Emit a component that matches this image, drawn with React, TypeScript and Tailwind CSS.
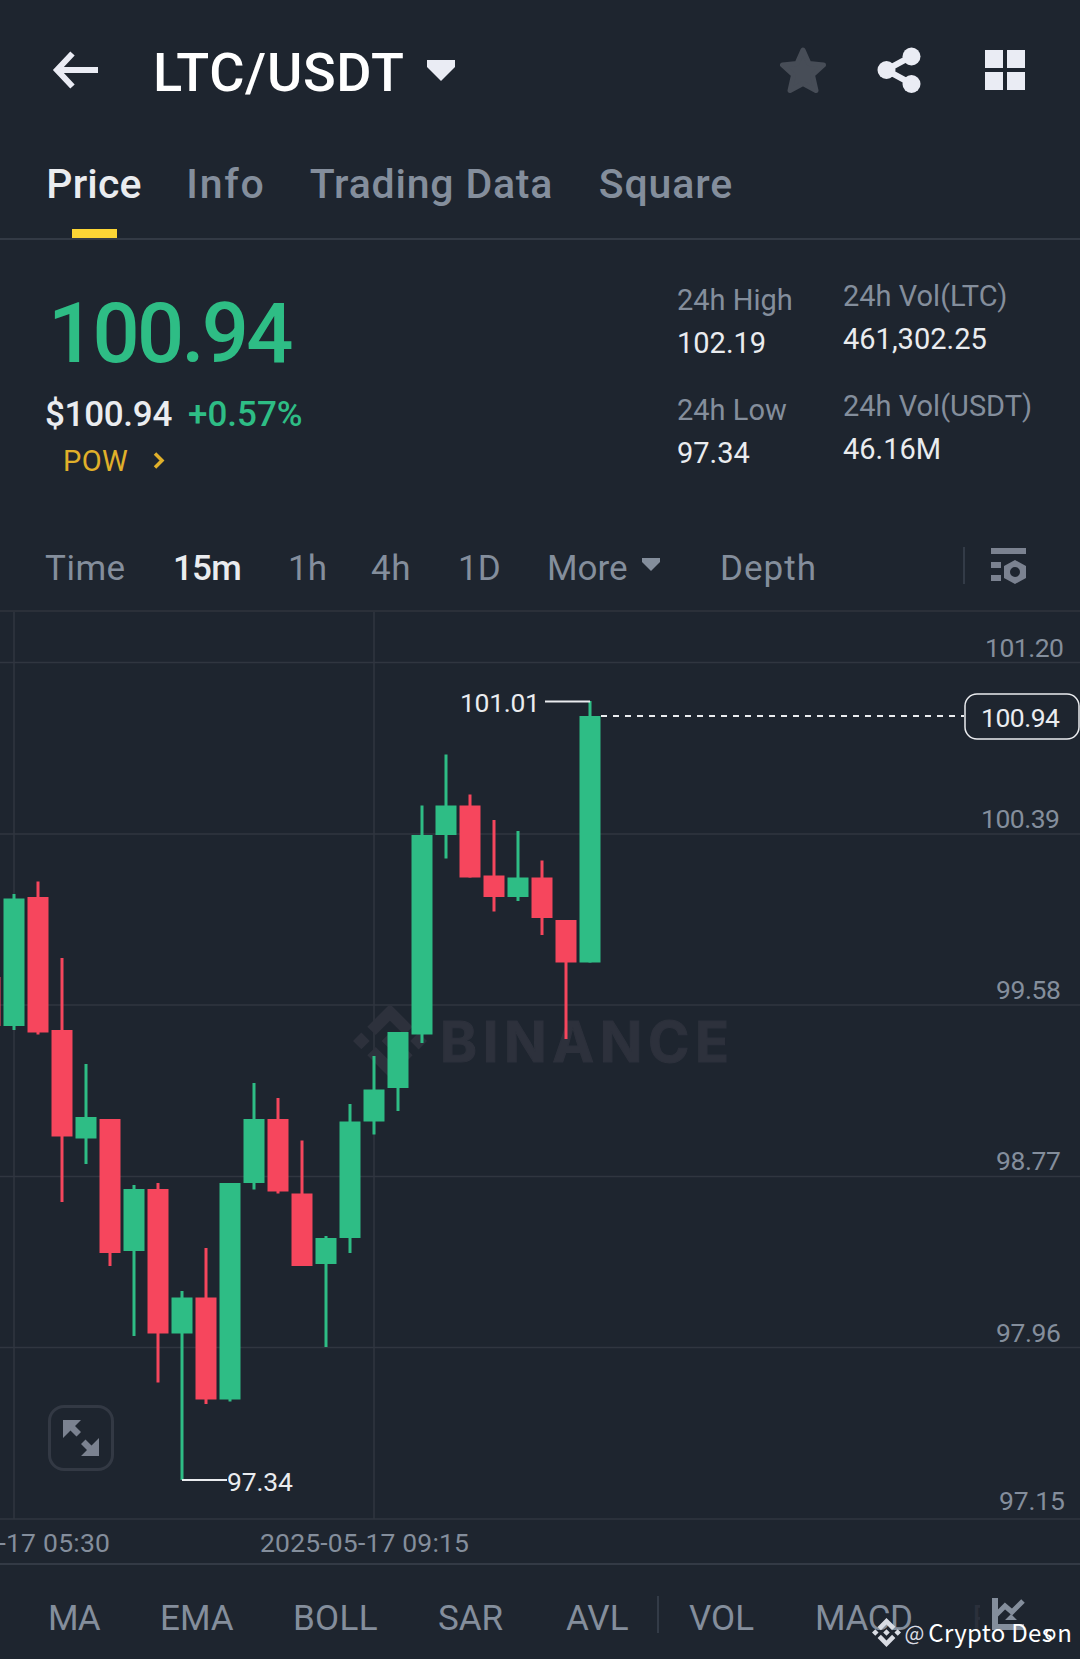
import clsx from 'clsx'
import { SiBinance } from 'react-icons/si'

const GREEN = '#2ebd85'
const RED = '#f6465d'

const tabs = [
    { name: 'Price', className: 'ml-[47px] w-[94px] tracking-[0.200px]', active: true },
    { name: 'Info', className: 'ml-[46px] w-[78px] tracking-[1.800px]' },
    { name: 'Trading Data', className: 'ml-[45px] w-[243px] tracking-[0.800px]' },
    { name: 'Square', className: 'ml-[45px] w-[136px] tracking-[0.900px]' },
]

const intervals = [
    { name: 'Time', className: 'ml-[45px] w-[128px] tracking-[0.500px]' },
    { name: '15m', className: 'w-[115px] tracking-[-0.800px]', active: true },
    { name: '1h', className: 'w-[83px]' },
    { name: '4h', className: 'w-[87px] tracking-[0.500px]' },
    { name: '1D', className: 'w-[89px]' },
]

const indicators = [
    { name: 'MA', className: 'ml-[48px] w-[112px] tracking-[-1px]' },
    { name: 'EMA', className: 'w-[133px]' },
    { name: 'BOLL', className: 'w-[145px] tracking-[0.300px]' },
    { name: 'SAR', className: 'w-[128px]' },
    { name: 'AVL', className: 'w-[91px]' },
]

// horizontal grid lines and their labels, in chart pixels
const priceLevels = [
    { price: '101.20', y: 50.5, x: 985, base: 45, width: 79 },
    { price: '100.39', y: 222, x: 981, base: 216, width: 79 },
    { price: '99.58', y: 393, x: 996, base: 387, width: 65 },
    { price: '98.77', y: 564.5, x: 996, base: 558, width: 65 },
    { price: '97.96', y: 735.5, x: 996, base: 730, width: 65 },
    { price: '97.15', y: 907, x: 999, base: 898, width: 66 },
]

// x, wick top, body top, body bottom, wick bottom, rising
const candles: [number, number, number, number, number, boolean][] = [
    [-10, 365, 365, 414, 414, false],
    [14, 282, 286.5, 414, 418, true],
    [38, 269.5, 285, 420.5, 422.5, false],
    [62, 346, 418, 524.5, 590, false],
    [86, 452, 505, 526.5, 552, true],
    [110, 507, 507, 641, 654, false],
    [134, 573, 577, 639, 724, true],
    [158, 571, 577, 721.5, 770.5, false],
    [182, 679, 685.5, 721.5, 868, true],
    [206, 636, 685.5, 787.5, 792, false],
    [230, 571, 571, 787.5, 789.5, true],
    [254, 471, 507, 571, 577.5, true],
    [278, 486, 507, 579.5, 581.5, false],
    [302, 528.5, 581.5, 654, 654, false],
    [326, 624, 626, 652, 735, true],
    [350, 492, 509.5, 626, 641, true],
    [374, 444, 477.5, 509.5, 522.5, true],
    [398, 420, 420, 476, 499, true],
    [422, 193.5, 223, 422.5, 431, true],
    [446, 142.5, 193.5, 223, 246.5, true],
    [470, 182.5, 193.5, 265.5, 265.5, false],
    [494, 208, 263.5, 285, 299.5, false],
    [518, 219, 265.5, 285, 289, true],
    [542, 248.5, 265.5, 306, 323, false],
    [566, 308, 308, 350.5, 427, false],
    [590, 89, 104, 350.5, 350.5, true],
]

function Header() {
    return (
        <header className="flex h-[140px] items-center">
            <svg className="ml-[52px] h-[38px] w-[47px]" viewBox="0 0 47 38" fill="none" stroke="#eaecf4" strokeWidth="6">
                <path d="M46 19H5M20.5 2.5L5 19l15.500 16.500" />
            </svg>
            <h1 className="ml-[54px] w-[252px] pt-[5px] text-[54px] font-medium leading-none tracking-[0.700px] text-white">
                LTC/USDT
            </h1>
            <svg className="ml-[22px] h-[21px] w-[28px]" viewBox="0 0 28 21">
                <path d="M0 0h28v7L14 21 0 7z" fill="#eaecf4" />
            </svg>
            <svg
                className="ml-[325px] h-[48px] w-[46px]"
                viewBox="0 0 46 48"
                fill="#474d57"
                stroke="#474d57"
                strokeWidth="5"
                strokeLinejoin="round"
            >
                <path d="M23 4l6 13.500 14.500 1.500-11 10 3.500 15.500L23 37.500 10 44.500 13.500 29 2.500 19l14.500-1.500z" />
            </svg>
            <svg className="ml-[51px] h-[46px] w-[44px]" viewBox="0 0 44 46" fill="#eaecf4">
                <path d="M35 9L9 23l26 14" fill="none" stroke="#eaecf4" strokeWidth="6" />
                <circle cx="9.500" cy="23" r="9" />
                <circle cx="34.500" cy="9.500" r="9" />
                <circle cx="34.500" cy="37" r="9" />
            </svg>
            <div className="ml-[64px] grid grid-cols-2 gap-[4px]">
                <div className="size-[18px] bg-[#eaecf4]" />
                <div className="size-[18px] bg-[#eaecf4]" />
                <div className="size-[18px] bg-[#eaecf4]" />
                <div className="size-[18px] bg-[#eaecf4]" />
            </div>
        </header>
    )
}

function Stat({ label, value }: { label: string; value: string }) {
    return (
        <div className="whitespace-nowrap text-[29px] leading-[43px]">
            <div className="text-[#848e9c]">{label}</div>
            <div className="text-[#eaecef]">{value}</div>
        </div>
    )
}

function Ticker() {
    return (
        <section className="flex h-[285px]">
            <div className="w-[677px] pt-[52px]">
                <div className="ml-[48px] text-[83px] font-medium leading-[84px] tracking-[-2.700px] text-[#2ebd85]">
                    100.94
                </div>
                <div className="mt-[19px] flex text-[35px] font-medium leading-[40px]">
                    <span className="ml-[45px] w-[143px] tracking-[-0.300px] text-[#eaecef]">$100.94</span>
                    <span className="text-[#2ebd85]">+0.57%</span>
                </div>
                <div className="mt-[8px] flex items-center text-[#e0b02a]">
                    <span className="ml-[63px] w-[90px] text-[29px] leading-[36px] tracking-[0.400px]">POW</span>
                    <svg className="mb-[2px] h-[17px] w-[12px]" viewBox="0 0 12 17" fill="none" stroke="currentColor" strokeWidth="3.500">
                        <path d="M2 1.500l7 7-7 7" />
                    </svg>
                </div>
            </div>
            <div className="flex w-[166px] flex-col gap-[24px] pt-[39px]">
                <Stat label="24h High" value="102.19" />
                <Stat label="24h Low" value="97.34" />
            </div>
            <div className="flex flex-col gap-[24px] pt-[35px]">
                <Stat label="24h Vol(LTC)" value="461,302.25" />
                <Stat label="24h Vol(USDT)" value="46.16M" />
            </div>
        </section>
    )
}

function IntervalBar() {
    return (
        <div className="flex h-[87px] items-center border-b-2 border-[#2b3039] pt-[2px] text-[35px] leading-none text-[#848e9c]">
            {intervals.map(({ name, className, active }) => (
                <span key={name} className={clsx(className, active && 'font-medium text-[#eaecef]')}>
                    {name}
                </span>
            ))}
            <span className="w-[95px]">More</span>
            <svg className="mb-[8px] h-[13px] w-[18px]" viewBox="0 0 18 13">
                <path d="M0 0h18v4L9 13 0 4z" fill="#848e9c" />
            </svg>
            <span className="ml-[60px] w-[243px] tracking-[1px]">Depth</span>
            <div className="mb-[6px] h-[37px] w-[2px] bg-[#333b47]" />
            <svg className="mb-[4px] ml-[26px] h-[37px] w-[35px]" viewBox="0 0 35 37" fill="#7b8290">
                <path d="M0 0h35v6H0zM0 14h10v6H0zM0 27h10v6H0z" />
                <path
                    fillRule="evenodd"
                    d="M24 12l11 6v12l-11 6-11-6V18zM24 19a5 5 0 100 10 5 5 0 000-10z"
                />
            </svg>
        </div>
    )
}

function Chart() {
    return (
        <div className="relative h-[951px]">
            <svg className="block h-[951px] w-[1080px]" viewBox="0 0 1080 951" fontSize="26.500">
                <g stroke="#303640" strokeWidth="1.500">
                    {priceLevels.map(({ price, y }) => (
                        <line key={price} x1="0" x2="1080" y1={y} y2={y} />
                    ))}
                    <line x1="14" x2="14" y1="0" y2="907" />
                    <line x1="374" x2="374" y1="0" y2="907" />
                </g>

                <SiBinance x="353" y="392" size={74} color="#2d313c" />
                <text
                    x="440"
                    y="450"
                    fontSize="56"
                    fontWeight="700"
                    fill="#2d313c"
                    stroke="#2d313c"
                    strokeWidth="1"
                    textLength="289"
                    className="font-['Inter',sans-serif]"
                >
                    BINANCE
                </text>

                {candles.map(([x, high, top, bottom, low, rising]) => (
                    <g key={x} fill={rising ? GREEN : RED}>
                        <rect x={x - 1.5} y={high} width="3" height={low - high} />
                        <rect x={x - 10.5} y={top} width="21" height={bottom - top} />
                    </g>
                ))}

                <g fill="#848e9c">
                    {priceLevels.map(({ price, x, base, width }) => (
                        <text key={price} x={x} y={base} textLength={width}>
                            {price}
                        </text>
                    ))}
                    <text x="-100" y="940" textLength="210">
                        2025-05-17 05:30
                    </text>
                    <text x="260" y="940" textLength="209">
                        2025-05-17 09:15
                    </text>
                </g>

                <g stroke="#eaecef" strokeWidth="2">
                    <line x1="545" x2="590" y1="89.500" y2="89.500" />
                    <line x1="182" x2="227" y1="868" y2="868" />
                    <line x1="601" x2="964" y1="104" y2="104" strokeDasharray="6 6" />
                </g>
                <g fill="#eaecef">
                    <text x="460" y="100" textLength="80">
                        101.01
                    </text>
                    <text x="227" y="879" textLength="66">
                        97.34
                    </text>
                    <rect x="965" y="82" width="114" height="45" rx="12" fill="#1e252f" stroke="#eaecef" strokeWidth="1.500" />
                    <text x="981" y="115" textLength="79">
                        100.94
                    </text>
                </g>
            </svg>

            <button className="absolute left-[48px] top-[793px] flex size-[66px] items-center justify-center rounded-[16px] border-[3px] border-[#333944]">
                <svg className="size-[36px]" viewBox="0 0 36 36" fill="#7b8290">
                    <path d="M0 0h18l-6 6 6 6-4.500 4.500-6-6L0 18zM36 36H18l6-6-6-6 4.500-4.500 6 6L36 18z" />
                </svg>
            </button>
        </div>
    )
}

function IndicatorBar() {
    return (
        <div className="flex h-[96px] items-center border-t-2 border-[#333a45] pt-[13px] text-[35px] leading-none text-[#848e9c]">
            {indicators.map(({ name, className }) => (
                <span key={name} className={className}>
                    {name}
                </span>
            ))}
            <div className="mb-[9px] h-[37px] w-[2px] bg-[#333b47]" />
            <span className="ml-[30px] w-[126px]">VOL</span>
            <span className="w-[157px] tracking-[-0.400px]">MACD</span>
            <span className="w-[8px] overflow-hidden text-[#2b303b]">R</span>
            <svg className="mb-[9px] ml-[12px] h-[33px] w-[33px]" viewBox="0 0 33 33" fill="#848e9c">
                <path d="M0 0h6v26h26v6H0zM19 16l6 6H13z" />
                <path d="M4 17l9-9 7 6L31 3" fill="none" stroke="#848e9c" strokeWidth="5" />
            </svg>
        </div>
    )
}

function Signature() {
    return (
        <div className="absolute bottom-[9px] right-[8px] flex h-[36px] items-center whitespace-nowrap font-['Noto_Sans_CJK_SC',sans-serif] text-[24px] leading-[36px] text-white">
            <SiBinance size={29} className="text-[#d9dce3]" />
            <span className="ml-[3px] text-[21px] text-[#d9dce3]">@</span>
            <span className="ml-[4px] tracking-[0.300px]">Crypto Des</span>
            <span className="ml-[-9px] text-[20px]">o</span>
            <span className="ml-[1px]">n</span>
        </div>
    )
}

export default function App() {
    return (
        <main className="relative h-[1659px] w-[1080px] overflow-hidden bg-[#1e252f] font-['Roboto',sans-serif]">
            <Header />
            <nav className="flex h-[100px] border-b-2 border-[#333a45] text-[41px] font-medium leading-[89px]">
                {tabs.map(({ name, className, active }) => (
                    <div
                        key={name}
                        className={clsx(
                            'flex flex-col items-center whitespace-nowrap',
                            className,
                            active ? 'text-[#eaecef]' : 'text-[#848e9c]',
                        )}
                    >
                        {name}
                        {active && <div className="h-[9px] w-[45px] bg-[#fcd535]" />}
                    </div>
                ))}
            </nav>
            <Ticker />
            <IntervalBar />
            <Chart />
            <IndicatorBar />
            <Signature />
        </main>
    )
}
